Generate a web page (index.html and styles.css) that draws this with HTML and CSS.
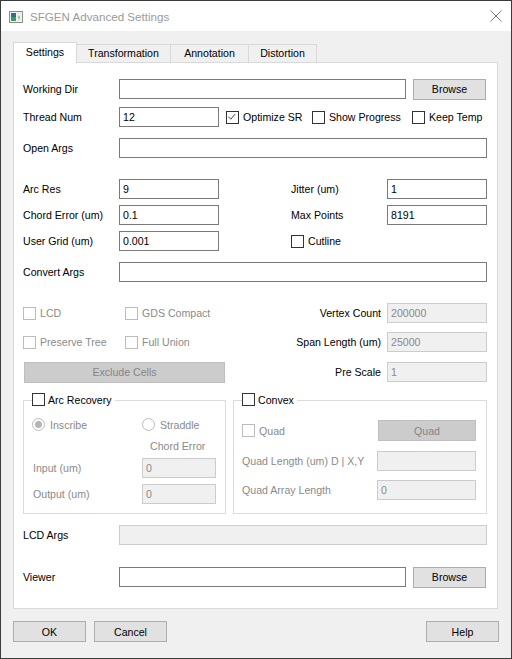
FILE: index.html
```html
<!DOCTYPE html>
<html>
<head>
<meta charset="utf-8">
<title>SFGEN Advanced Settings</title>
<link rel="stylesheet" href="styles.css">
</head>
<body>
<div class="window">
  <div class="titlebar">
    <svg class="appicon" viewBox="0 0 14 12" width="14" height="12">
      <rect x="0.5" y="0.5" width="13" height="11" fill="#f2f4f2" stroke="#8c8c8c"/>
      <rect x="2" y="2" width="5" height="8" fill="#2f6f8f"/>
      <rect x="2" y="6" width="5" height="4" fill="#3e9a5a"/>
      <rect x="8" y="2" width="4" height="8" fill="#e6efe6"/>
      <rect x="9" y="5" width="2" height="3" fill="#9fd29f"/>
    </svg>
    <span class="title">SFGEN Advanced Settings</span>
    <svg class="close" viewBox="0 0 12 12" width="12" height="12">
      <path d="M0.5 0.5 L11.5 11.5 M11.5 0.5 L0.5 11.5" stroke="#7a7a7a" stroke-width="1" fill="none"/>
    </svg>
  </div>
  <div class="client">
    <div class="tabs">
      <div class="tab active t1">Settings</div>
      <div class="tab t2">Transformation</div>
      <div class="tab t3">Annotation</div>
      <div class="tab t4">Distortion</div>
    </div>
    <div class="panel">
      <div class="row r1">
        <span class="lbl">Working Dir</span>
        <span class="inp w287"></span>
        <button class="btn gap7">Browse</button>
      </div>
      <div class="row m8">
        <span class="lbl">Thread Num</span>
        <span class="inp w100">12</span>
        <span class="chk gap7 wopt"><span class="box checked"><svg viewBox="0 0 13 13" width="11" height="11"><path d="M1.5 5.5 L4.5 8.5 L9.5 2.5" stroke="#333" stroke-width="1.1" fill="none"/></svg></span>Optimize SR</span>
        <span class="chk wshow"><span class="box"></span>Show Progress</span>
        <span class="chk"><span class="box"></span>Keep Temp</span>
      </div>
      <div class="row m11">
        <span class="lbl">Open Args</span>
        <span class="inp full"></span>
      </div>

      <div class="row m21">
        <span class="lbl">Arc Res</span>
        <span class="inp w100">9</span>
        <span class="lbl right-col">Jitter (um)</span>
        <span class="inp w100">1</span>
      </div>
      <div class="row m6">
        <span class="lbl">Chord Error (um)</span>
        <span class="inp w100">0.1</span>
        <span class="lbl right-col">Max Points</span>
        <span class="inp w100">8191</span>
      </div>
      <div class="row m6">
        <span class="lbl">User Grid (um)</span>
        <span class="inp w100">0.001</span>
        <span class="chk right-col"><span class="box"></span>Cutline</span>
      </div>
      <div class="row m11">
        <span class="lbl">Convert Args</span>
        <span class="inp full"></span>
      </div>

      <div class="row m21">
        <div class="leftpart">
          <span class="chk dis wchk"><span class="box"></span>LCD</span>
          <span class="chk dis"><span class="box"></span>GDS Compact</span>
        </div>
        <span class="rlbl">Vertex Count</span>
        <span class="inp w100 dis">200000</span>
      </div>
      <div class="row m9">
        <div class="leftpart">
          <span class="chk dis wchk"><span class="box"></span>Preserve Tree</span>
          <span class="chk dis"><span class="box"></span>Full Union</span>
        </div>
        <span class="rlbl">Span Length (um)</span>
        <span class="inp w100 dis">25000</span>
      </div>
      <div class="row m10">
        <div class="leftpart">
          <button class="btn disbtn exclude">Exclude Cells</button>
        </div>
        <span class="rlbl">Pre Scale</span>
        <span class="inp w100 dis">1</span>
      </div>

      <div class="groups">
        <div class="frame arc">
          <div class="legend"><span class="box"></span>Arc Recovery</div>
          <div class="radios">
            <span class="rad wrad"><span class="circle on"></span>Inscribe</span>
            <span class="rad"><span class="circle"></span>Straddle</span>
          </div>
          <div class="chordhead">Chord Error</div>
          <div class="row m5">
            <span class="glbl">Input (um)</span>
            <span class="inp w74 dis">0</span>
          </div>
          <div class="row m6">
            <span class="glbl">Output (um)</span>
            <span class="inp w74 dis">0</span>
          </div>
        </div>
        <div class="frame convex">
          <div class="legend"><span class="box"></span>Convex</div>
          <div class="row quadrow">
            <span class="chk dis wquad"><span class="box"></span>Quad</span>
            <button class="btn disbtn quadbtn">Quad</button>
          </div>
          <div class="row m10">
            <span class="clbl">Quad Length (um) D | X,Y</span>
            <span class="inp w99 dis"></span>
          </div>
          <div class="row m9">
            <span class="clbl">Quad Array Length</span>
            <span class="inp w99 dis">0</span>
          </div>
        </div>
      </div>

      <div class="row m11">
        <span class="lbl">LCD Args</span>
        <span class="inp full dis"></span>
      </div>
      <div class="row m22">
        <span class="lbl">Viewer</span>
        <span class="inp w287"></span>
        <button class="btn gap7">Browse</button>
      </div>
    </div>
    <div class="footer">
      <button class="btn">OK</button>
      <button class="btn cancel">Cancel</button>
      <button class="btn help">Help</button>
    </div>
  </div>
</div>
</body>
</html>
```
FILE: styles.css
```css
html, body {
  margin: 0;
  padding: 0;
}
body {
  font-family: "Liberation Sans", Arial, sans-serif;
  font-size: 10.6px;
  color: #000;
  width: 512px;
  height: 659px;
}
.window {
  width: 512px;
  height: 659px;
  box-sizing: border-box;
  border: 1px solid #3b3b3b;
  background: #f0f0f0;
  display: flex;
  flex-direction: column;
}
.titlebar {
  height: 30px;
  flex-shrink: 0;
  background: #fff;
  display: flex;
  align-items: center;
}
.appicon {
  margin-left: 8px;
  margin-top: 1px;
}
.title {
  margin-left: 7px;
  font-size: 11.6px;
  color: #9a9a9a;
}
.close {
  margin-left: auto;
  margin-right: 9px;
}
.client {
  flex: 1;
  padding: 11px 0 0 12px;
}
.tabs {
  display: flex;
  align-items: flex-end;
  height: 20px;
  position: relative;
  z-index: 1;
}
.tab {
  height: 18px;
  box-sizing: border-box;
  border: 1px solid #d9d9d9;
  border-bottom: none;
  background: #f0f0f0;
  text-align: center;
  line-height: 17px;
  margin-left: -1px;
}
.tab.active {
  height: 21px;
  margin-bottom: -1px;
  background: #fff;
  line-height: 19px;
  margin-left: 0;
}
.t1 { width: 64px; }
.t2 { width: 95px; }
.t3 { width: 79px; }
.t4 { width: 69px; }
.panel {
  width: 485px;
  height: 547px;
  box-sizing: border-box;
  border: 1px solid #d9d9d9;
  background: #fff;
  padding: 16px 9px 0 9px;
}
.row {
  display: flex;
  align-items: center;
  height: 20px;
}
.m5 { margin-top: 5px; }
.m6 { margin-top: 6px; }
.m8 { margin-top: 8px; }
.m9 { margin-top: 9px; }
.m10 { margin-top: 10px; }
.m11 { margin-top: 11px; }
.m21 { margin-top: 21px; }
.m22 { margin-top: 22px; }
.lbl {
  width: 96px;
  flex-shrink: 0;
  white-space: nowrap;
}
.right-col {
  margin-left: 72px;
}
.inp {
  height: 20px;
  box-sizing: border-box;
  border: 1px solid #7a7a7a;
  background: #fff;
  padding: 0 3px;
  display: flex;
  align-items: center;
  flex-shrink: 0;
}
.inp.dis {
  border-color: #cccccc;
  background: #f0f0f0;
  color: #8a8a8a;
}
.w74 { width: 74px; }
.w99 { width: 99px; }
.w100 { width: 100px; }
.w287 { width: 287px; }
.full { width: 368px; }
.btn {
  width: 73px;
  height: 21px;
  box-sizing: border-box;
  border: 1px solid #adadad;
  background: #e1e1e1;
  font: inherit;
  color: #000;
  padding: 0;
  margin: 0;
  display: flex;
  align-items: center;
  justify-content: center;
  flex-shrink: 0;
}
.btn.disbtn {
  background: #cccccc;
  border-color: #bfbfbf;
  color: #858585;
}
.gap7 { margin-left: 7px; }
.chk {
  display: flex;
  align-items: center;
  white-space: nowrap;
  flex-shrink: 0;
}
.chk.dis { color: #8a8a8a; }
.box {
  width: 13px;
  height: 13px;
  box-sizing: border-box;
  border: 1px solid #333;
  background: #fff;
  margin-right: 4px;
  display: flex;
  align-items: center;
  justify-content: center;
  flex-shrink: 0;
}
.chk.dis .box { border-color: #bcbcbc; }
.wopt { width: 86px; }
.wshow { width: 100px; }
.wchk { width: 102px; }
.leftpart {
  width: 268px;
  display: flex;
  align-items: center;
  flex-shrink: 0;
}
.rlbl {
  width: 96px;
  box-sizing: border-box;
  padding-right: 6px;
  text-align: right;
  white-space: nowrap;
  flex-shrink: 0;
}
.exclude {
  width: 201px;
  margin-left: 1px;
}
.groups {
  display: flex;
  gap: 7px;
  margin-top: 18px;
}
.frame {
  position: relative;
  height: 114px;
  box-sizing: border-box;
  border: 1px solid #dcdcdc;
  padding-left: 8px;
}
.arc { width: 203px; }
.convex { width: 254px; }
.legend {
  position: absolute;
  top: -8px;
  left: 8px;
  height: 13px;
  display: flex;
  align-items: center;
  background: #fff;
  padding-right: 3px;
  white-space: nowrap;
}
.legend .box { margin-right: 3px; }
.radios {
  margin-top: 17px;
  height: 13px;
  display: flex;
  align-items: center;
  color: #8a8a8a;
}
.rad {
  display: flex;
  align-items: center;
  white-space: nowrap;
}
.wrad { width: 110px; }
.circle {
  width: 13px;
  height: 13px;
  box-sizing: border-box;
  border: 1px solid #bcbcbc;
  border-radius: 50%;
  background: #fff;
  margin-right: 5px;
  display: flex;
  align-items: center;
  justify-content: center;
}
.circle.on::after {
  content: "";
  width: 7px;
  height: 7px;
  border-radius: 50%;
  background: #b4b4b4;
}
.chordhead {
  margin-top: 8px;
  height: 14px;
  line-height: 14px;
  padding-left: 118px;
  color: #8a8a8a;
}
.glbl {
  width: 109px;
  margin-left: 1px;
  color: #8a8a8a;
  flex-shrink: 0;
}
.quadrow {
  margin-top: 19px;
  height: 21px;
}
.wquad { width: 136px; }
.quadbtn { width: 98px; }
.clbl {
  width: 135px;
  color: #8a8a8a;
  white-space: nowrap;
  flex-shrink: 0;
}
.footer {
  display: flex;
  width: 486px;
  margin-top: 12px;
}
.cancel { margin-left: 8px; }
.help { margin-left: auto; }
```
